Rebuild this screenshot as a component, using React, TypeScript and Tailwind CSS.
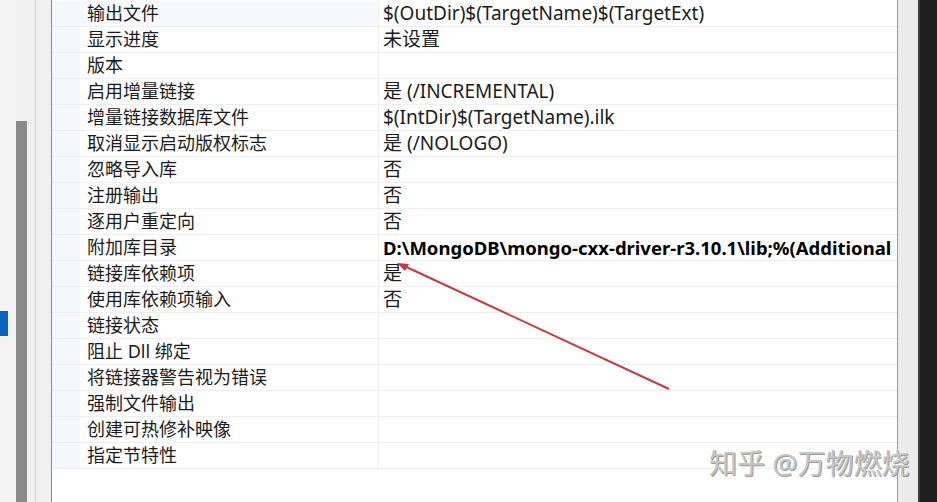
import React from "react";

const rows: { name: string; value: string; bold?: boolean }[] = [
  { name: "输出文件", value: "$(OutDir)$(TargetName)$(TargetExt)" },
  { name: "显示进度", value: "未设置" },
  { name: "版本", value: "" },
  { name: "启用增量链接", value: "是 (/INCREMENTAL)" },
  { name: "增量链接数据库文件", value: "$(IntDir)$(TargetName).ilk" },
  { name: "取消显示启动版权标志", value: "是 (/NOLOGO)" },
  { name: "忽略导入库", value: "否" },
  { name: "注册输出", value: "否" },
  { name: "逐用户重定向", value: "否" },
  {
    name: "附加库目录",
    value: "D:\\MongoDB\\mongo-cxx-driver-r3.10.1\\lib;%(Additional",
    bold: true,
  },
  { name: "链接库依赖项", value: "是" },
  { name: "使用库依赖项输入", value: "否" },
  { name: "链接状态", value: "" },
  { name: "阻止 Dll 绑定", value: "" },
  { name: "将链接器警告视为错误", value: "" },
  { name: "强制文件输出", value: "" },
  { name: "创建可热修补映像", value: "" },
  { name: "指定节特性", value: "" },
];

export default function App() {
  return (
    <div
      className="relative flex w-[937px] h-[502px] overflow-hidden bg-white text-[#1b1b1b]"
      style={{ fontFamily: '"Noto Sans", "Noto Sans CJK SC", sans-serif' }}
    >
      {/* left strip */}
      <div className="flex h-full w-[52px] shrink-0">
        <div className="w-[16px] bg-[#f3f3f3] pt-[311px]">
          <div className="h-[25px] w-[8px] bg-[#0a62c0]" />
        </div>
        <div className="w-[11px] bg-[#f0f0f0] pt-[121px] flex flex-col">
          <div className="flex-1 bg-[#8a8a8a]" />
        </div>
        <div className="w-[8px] bg-[#f0f0f0]" />
        <div className="w-px bg-[#d2d2d2]" />
        <div className="w-[15px] bg-[#f0f0f0]" />
        <div className="w-px bg-[#8c8c8c]" />
      </div>

      {/* property grid */}
      <div className="flex-1 min-w-0 pt-[1px]">
        {rows.map((r, i) => (
          <div
            key={i}
            className={`flex h-[26px] border-b border-[#efefef] ${i === 0 ? "bg-[#f7f9fd]" : ""}`}
          >
            <div className="w-[28px] shrink-0 bg-[#f4f7fc]" />
            <div className="w-[298px] shrink-0 pl-[7px] text-[18px] leading-[25px] whitespace-nowrap overflow-hidden">
              {r.name}
            </div>
            <div
              className={`flex-1 min-w-0 border-l border-[#efefef] pl-[4px] leading-[25px] whitespace-nowrap overflow-hidden ${
                r.bold ? "font-bold text-black text-[18.5px]" : "text-[19px]"
              } ${i === 0 ? "bg-white" : ""}`}
            >
              {r.value}
            </div>
          </div>
        ))}
      </div>

      {/* right edge */}
      <div className="flex h-full shrink-0">
        <div className="w-px bg-[#9a9a9a]" />
        <div className="w-[20px] bg-[#ececec]" />
        <div className="w-[2px] bg-[#3c3c3c]" />
        <div className="w-[17px] bg-[#1e1e1e]" />
      </div>

      {/* red annotation arrow */}
      <svg
        className="absolute left-0 top-0 pointer-events-none"
        width="937"
        height="502"
        viewBox="0 0 937 502"
      >
        <line x1="669" y1="389" x2="402" y2="265" stroke="#c8393b" strokeWidth="2" />
        <polygon points="397,263 409,264 405,271" fill="#c8393b" />
      </svg>

      {/* watermark */}
      <div
        className="absolute left-[709px] top-[446px] text-[28px] leading-[34px] text-[#c6c6c6] whitespace-nowrap"
        style={{ textShadow: "1px 1px 0 #9a9a9a, -1px -1px 0 #ffffff" }}
      >
        知乎 @万物燃烧
      </div>
    </div>
  );
}
